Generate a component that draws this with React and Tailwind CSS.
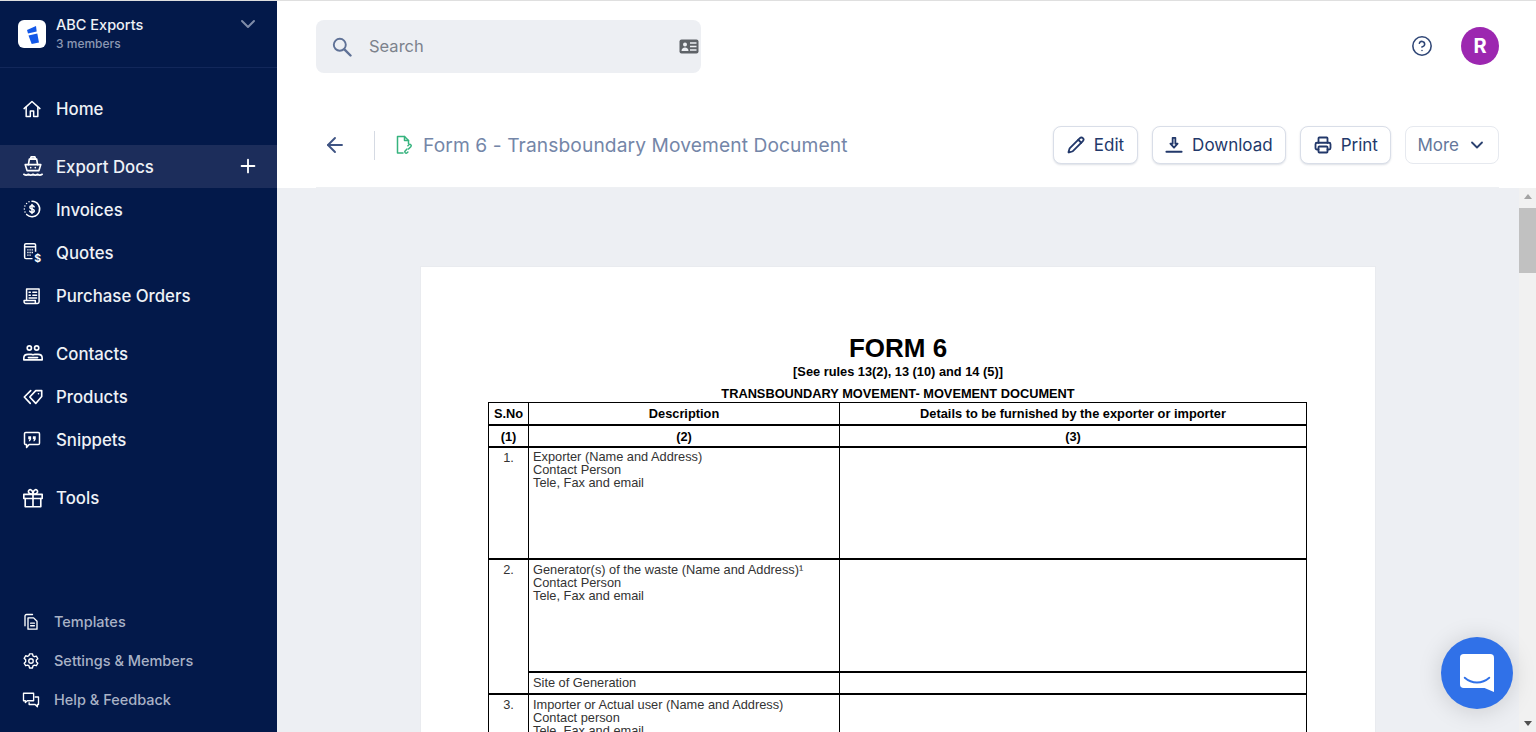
import { ChevronDown, Plus, ArrowLeft, Pencil, Printer, CircleHelp } from "lucide-react";

const Icon = ({ children, className = "" }) => (
  <svg
    viewBox="0 0 24 24"
    fill="none"
    stroke="currentColor"
    strokeWidth="1.800"
    strokeLinecap="round"
    strokeLinejoin="round"
    className={className}
  >
    {children}
  </svg>
);

const HomeIcon = () => (
  <Icon className="h-5 w-5">
    <path d="M2.500 11.500 12 3l9.500 8.500" />
    <path d="M5 10v11h5v-6.500h4V21h5V10" />
  </Icon>
);

const ShipIcon = () => (
  <Icon className="h-[22px] w-[22px]">
    <path d="M10 2h4l.8 2.500H9.200z" />
    <path d="M7 10.500 8 4.500h8l1 6" />
    <path d="M3.500 10.500h17l-2 6.500h-13z" />
    <path d="M2 21c1.800 1.200 3.400 1.200 5 0 1.700 1.200 3.300 1.200 5 0 1.700 1.200 3.300 1.200 5 0 1.600 1.200 3.200 1.200 5 0" />
    <path d="M9.500 13.800h.01M14.500 13.800h.01" />
  </Icon>
);

const InvoiceIcon = () => (
  <Icon className="h-5 w-5">
    <path d="M12 2.800a9.200 9.200 0 1 1-6.500 15.700" />
    <path d="M2.800 12h.01M3.500 8.300h.01M5.500 5.300h.01M8.400 3.400h.01M3.600 15.600h.01" />
    <path d="M14.600 9.500c-.5-1-1.500-1.300-2.600-1.300-1.400 0-2.500.7-2.500 1.900 0 2.600 5.200 1.300 5.200 3.900 0 1.200-1.200 1.900-2.700 1.900-1.100 0-2.200-.4-2.700-1.400" />
    <path d="M12 6.500v11" />
  </Icon>
);

const QuoteIcon = () => (
  <svg viewBox="0 0 24 24" fill="none" className="h-[21px] w-[21px]">
    <path d="M15.500 11V3.500A1.500 1.500 0 0 0 14 2H4.500A1.500 1.500 0 0 0 3 3.500v14A1.500 1.500 0 0 0 4.500 19H12" stroke="currentColor" strokeWidth="1.700" />
    <path d="M3 5.500h12.500" stroke="currentColor" strokeWidth="1.700" />
    <path d="M6 9h1.500M8.500 9H10M11 9h1.500M6 12h1.500M8.500 12H10M11 12h1.500M6 15h1.500M8.500 15H10" stroke="currentColor" strokeWidth="1.700" />
    <text x="14" y="23" fontSize="12" fontWeight="700" fill="currentColor" fontFamily="Inter, sans-serif">$</text>
  </svg>
);

const OrderIcon = () => (
  <Icon className="h-5 w-5">
    <path d="M5.500 17.500V3.500h15v15.500a2 2 0 0 1-2 2H4.500a2 2 0 0 1-2-2v-1.500h13.500v3.500" />
    <path d="M8.500 7.500h1.500M13 7.500h4.500M8.500 11h1.500M13 11h4.500M8.500 14.500h9" />
  </Icon>
);

const ContactsIcon = () => (
  <Icon className="h-[22px] w-[22px]">
    <circle cx="8" cy="6.500" r="2.300" />
    <circle cx="16" cy="6.500" r="2.300" />
    <path d="M2 19.500v-2c0-2.500 2-4 4.500-4H10c1.200 0 2 .5 2 .5s.8-.5 2-.5h3.500c2.500 0 4.500 1.500 4.500 4v2z" />
    <path d="M7 17h10" />
  </Icon>
);

const TagIcon = () => (
  <Icon className="h-[22px] w-[22px]">
    <path d="M8.500 12 15 5h6.500v6.500L15 19z" />
    <path d="M9.500 5 2.500 12 9 19" />
    <path d="M18 8.500h.01" />
  </Icon>
);

const SnippetIcon = () => (
  <svg viewBox="0 0 24 24" fill="none" className="h-5 w-5">
    <path d="M4.500 3h15A1.500 1.500 0 0 1 21 4.500V16a1.500 1.500 0 0 1-1.500 1.500H8.500L5.500 21v-3.500h-1A1.500 1.500 0 0 1 3 16V4.500A1.500 1.500 0 0 1 4.500 3z" stroke="currentColor" strokeWidth="1.800" strokeLinejoin="round" />
    <path d="M7.500 7.500h3.500v3.500l-1.500 2.500h-1.500l1-2.500h-1.500zM13 7.500h3.500v3.500L15 13.500h-1.500l1-2.500H13z" fill="currentColor" />
  </svg>
);

const GiftIcon = () => (
  <Icon className="h-[22px] w-[22px]">
    <rect x="2" y="8" width="20" height="4.500" />
    <path d="M3.500 12.500V21.500h17v-9M12 8v13.500" />
    <path d="M12 8C10 8 7 7.500 7 5a2 2 0 0 1 2.500-2C11 3.400 12 6 12 8zM12 8c2 0 5-.5 5-3a2 2 0 0 0-2.500-2C13 3.400 12 6 12 8z" />
  </Icon>
);

const TemplateIcon = () => (
  <Icon className="h-[18px] w-[18px]">
    <path d="M4 17V4a2 2 0 0 1 2-2h8" />
    <path d="M8 6.500h7.500l4.500 4.500v10.500H8z" />
    <path d="M11.500 13.500h5M11.500 17h5" />
  </Icon>
);

const GearIcon = () => (
  <Icon className="h-[18px] w-[18px]">
    <circle cx="12" cy="12" r="3" />
    <path d="M10 2.500h4l.6 2.700 1.900 1.100 2.600-.8 2 3.500-2 1.800v2.200l2 1.900-2 3.400-2.600-.8-1.900 1.100-.6 2.700h-4l-.6-2.700-1.900-1.100-2.600.8-2-3.400 2-1.900V10.300l-2-1.800 2-3.500 2.600.8 1.900-1.100z" />
  </Icon>
);

const ChatIcon = () => (
  <Icon className="h-[18px] w-[18px]">
    <path d="M2 3h13.500v10H7l-2.500 2.500V13H2z" />
    <path d="M17.500 8h4.500v10h-1.500v3l-3-3H9.500v-2.500" />
  </Icon>
);

const BrandMark = () => (
  <div className="flex h-7 w-7 items-center justify-center rounded-md bg-white">
    <svg viewBox="0 0 28 28" className="h-7 w-7">
      <path d="M9 10 18 6l.7 5.500L10 13.500z" fill="#1358e8" />
      <path d="M10.500 15.500l8.800-2L21 22.500 13.700 24z" fill="#1358e8" />
    </svg>
  </div>
);

const SearchGlyph = () => (
  <svg viewBox="0 0 20 20" fill="none" stroke="#5f7196" strokeLinecap="round" className="h-5 w-5">
    <circle cx="7.800" cy="7.800" r="6" strokeWidth="1.900" />
    <path d="M12.400 12.400 18.500 18.500" strokeWidth="2.400" />
  </svg>
);

const CardIcon = () => (
  <svg viewBox="0 0 20 15" className="h-[15px] w-5">
    <rect x="0.500" y="0.500" width="19" height="14" rx="2" fill="#5f6368" />
    <circle cx="6" cy="5.500" r="2" fill="#edeff3" />
    <path d="M2.500 12c0-2.300 1.500-3.500 3.500-3.500S9.500 9.700 9.500 12z" fill="#edeff3" />
    <path d="M11 4h6.500M11 7.500h6.500M11 11h6.500" stroke="#edeff3" strokeWidth="1.400" />
  </svg>
);

const FileLinkIcon = () => (
  <svg viewBox="0 0 18 20" fill="none" stroke="#36b37e" strokeWidth="1.500" strokeLinecap="round" strokeLinejoin="round" className="h-5 w-[18px]">
    <path d="M7 18H1.500V1.500h7l4 4v3" />
    <path d="M8.500 1.500v4h4" />
    <path d="M12.500 14l2.300-2.300a1.300 1.300 0 0 0-1.900-1.900l-1 1" />
    <path d="M11 14l-1.800 1.900a1.300 1.300 0 0 0 1.900 1.900l.8-.8" />
  </svg>
);

const DownloadIcon = () => (
  <svg viewBox="0 0 20 20" fill="none" stroke="currentColor" strokeWidth="2" strokeLinecap="round" strokeLinejoin="round" className="h-[18px] w-[18px]">
    <path d="M8.500 2h3v6.500h2.500L10 13 6 8.500h2.500z" />
    <path d="M1.500 17.500h17" />
  </svg>
);

const MessengerIcon = () => (
  <svg viewBox="0 0 36 40" className="h-[38px] w-[34px]">
    <path d="M4 0h28a4 4 0 0 1 4 4v36l-10-4H4a4 4 0 0 1-4-4V4a4 4 0 0 1 4-4z" fill="#fff" />
    <path d="M5 25c4 3.500 9 5 13 5s9-1.500 13-5" fill="none" stroke="#3071e8" strokeWidth="2" strokeLinecap="round" />
  </svg>
);

const mainGroups = [
  [{ label: "Home", icon: <HomeIcon /> }],
  [
    { label: "Export Docs", icon: <ShipIcon />, active: true },
    { label: "Invoices", icon: <InvoiceIcon /> },
    { label: "Quotes", icon: <QuoteIcon /> },
    { label: "Purchase Orders", icon: <OrderIcon /> },
  ],
  [
    { label: "Contacts", icon: <ContactsIcon /> },
    { label: "Products", icon: <TagIcon /> },
    { label: "Snippets", icon: <SnippetIcon /> },
  ],
  [{ label: "Tools", icon: <GiftIcon /> }],
];

const bottomLinks = [
  { label: "Templates", icon: <TemplateIcon /> },
  { label: "Settings & Members", icon: <GearIcon /> },
  { label: "Help & Feedback", icon: <ChatIcon /> },
];

function Sidebar() {
  return (
    <aside className="flex h-full w-[277px] shrink-0 flex-col bg-[#03194a] text-[#eef1f6]">
      <div className="flex h-[67px] shrink-0 items-center gap-2.5 border-b border-[#12275a] pl-[18px] pr-[17px]">
        <BrandMark />
        <div className="mb-[3px] flex-1">
          <p className="text-[14.500px] font-medium leading-[22px]">ABC Exports</p>
          <p className="text-[12px] font-medium leading-[16px] text-[#8b97b2]">3 members</p>
        </div>
        <ChevronDown className="mb-[20px] h-[24px] w-[24px] text-[#7f8ca9]" strokeWidth={2} />
      </div>

      <nav className="flex flex-col gap-[14.300px] pt-[19px]">
        {mainGroups.map((group) => (
          <div key={group[0].label} className="flex flex-col">
            {group.map((item) => (
              <div
                key={item.label}
                className={`flex h-[43.250px] items-center pl-[22px] pr-[18px] text-white ${item.active ? "bg-[#1c2d5b]" : ""}`}
              >
                <span className="flex w-[34px] shrink-0 items-center">{item.icon}</span>
                <span className="flex-1 pt-[2px] text-[16.800px] font-medium text-[#eef1f6]">{item.label}</span>
                {item.active && <Plus className="h-[22px] w-[22px]" strokeWidth={2} />}
              </div>
            ))}
          </div>
        ))}
      </nav>

      <div className="mt-auto flex flex-col pb-[13px]">
        {bottomLinks.map((item) => (
          <div key={item.label} className="flex h-[39px] items-center pl-[22px]">
            <span className="flex w-[32px] shrink-0 items-center text-white">{item.icon}</span>
            <span className="text-[14.500px] font-medium text-[#a9b2c6]">{item.label}</span>
          </div>
        ))}
      </div>
    </aside>
  );
}

function ActionButton({ icon, label }) {
  return (
    <button
      type="button"
      className="flex h-[38px] items-center gap-[9px] rounded-lg border border-[#d9dee8] bg-white px-[12.500px] text-[17px] text-[#22386a] shadow-[0_1px_2px_rgba(30,50,90,0.15)]"
    >
      {icon}
      <span className="pt-[2px]">{label}</span>
    </button>
  );
}

function Topbar() {
  return (
    <header className="bg-white">
      <div className="flex h-[72px] items-start justify-between pl-[39px] pr-[37px] pt-[19px]">
        <div className="flex h-[53px] w-[385px] items-center rounded-lg bg-[#edeff3] pl-[16px] pr-[2px]">
          <SearchGlyph />
          <span className="ml-[17px] flex-1 text-[16.500px] text-[#7c828c]">Search</span>
          <CardIcon />
        </div>
        <div className="flex items-center gap-[28px] pt-[7px]">
          <CircleHelp className="h-[22px] w-[22px] text-[#2f4676]" strokeWidth={1.700} />
          <div className="flex h-[38px] w-[38px] items-center justify-center rounded-full bg-[#9c27b0] text-[20px] font-bold text-white">
            R
          </div>
        </div>
      </div>
      <div className="ml-[39px] mr-[37px] flex h-[115px] items-start border-b border-[#eef0f3] pt-[53px]">
        <div className="flex h-[38px] items-center">
          <ArrowLeft className="ml-[7px] h-[24px] w-[24px] text-[#3f5483]" strokeWidth={1.900} />
          <span className="ml-[27px] mr-[21px] h-[29px] w-px bg-[#d5dae3]" />
          <FileLinkIcon />
          <h1 className="ml-[9px] text-[19.200px] tracking-[0.1px] text-[#7486a8]">
            Form 6 - Transboundary Movement Document
          </h1>
        </div>
        <div className="ml-auto flex gap-[14px]">
          <ActionButton icon={<Pencil className="h-[18px] w-[18px]" strokeWidth={2.400} />} label="Edit" />
          <ActionButton icon={<DownloadIcon />} label="Download" />
          <ActionButton icon={<Printer className="h-[18px] w-[18px]" strokeWidth={2.400} />} label="Print" />
          <button
            type="button"
            className="flex h-[38px] items-center gap-[8px] rounded-lg border border-[#e6e9ef] bg-white px-[11px] text-[17px] text-[#64779b]"
          >
            <span className="pt-[2px]">More</span>
            <ChevronDown className="h-[20px] w-[20px] text-[#2b4170]" strokeWidth={2.200} />
          </button>
        </div>
      </div>
    </header>
  );
}

const cell = "border border-b-2 border-black";

function FormTable() {
  return (
    <table className="w-[818px] table-fixed border-collapse text-[12.800px] leading-[13px] text-[#333]">
      <colgroup>
        <col className="w-[40px]" />
        <col className="w-[311px]" />
        <col className="w-[467px]" />
      </colgroup>
      <tbody>
        <tr className="h-[22px] text-center font-bold text-black">
          <td className={`${cell} pt-px align-middle`}>S.No</td>
          <td className={`${cell} pt-px align-middle`}>Description</td>
          <td className={`${cell} pt-px align-middle`}>Details to be furnished by the exporter or importer</td>
        </tr>
        <tr className="h-[22px] text-center font-bold text-black">
          <td className={`${cell} pt-[2px] align-middle`}>(1)</td>
          <td className={`${cell} pt-[2px] align-middle`}>(2)</td>
          <td className={`${cell} pt-[2px] align-middle`}>(3)</td>
        </tr>
        <tr className="h-[112.500px]">
          <td className={`${cell} pt-[3px] text-center align-top`}>1.</td>
          <td className={`${cell} pl-1 pt-[2px] align-top`}>
            Exporter (Name and Address)
            <br />
            Contact Person
            <br />
            Tele, Fax and email
          </td>
          <td className={cell} />
        </tr>
        <tr className="h-[113px]">
          <td rowSpan={2} className={`${cell} pt-[3px] text-center align-top`}>2.</td>
          <td className={`${cell} pl-1 pt-[3px] align-top`}>
            Generator(s) of the waste (Name and Address)¹
            <br />
            Contact Person
            <br />
            Tele, Fax and email
          </td>
          <td className={cell} />
        </tr>
        <tr className="h-[22px]">
          <td className={`${cell} pb-[2px] pl-1 align-middle`}>Site of Generation</td>
          <td className={cell} />
        </tr>
        <tr className="h-[112px]">
          <td className={`${cell} pt-[3px] text-center align-top`}>3.</td>
          <td className={`${cell} pl-1 pt-[3px] align-top`}>
            Importer or Actual user (Name and Address)
            <br />
            Contact person
            <br />
            Tele, Fax and email
          </td>
          <td className={cell} />
        </tr>
      </tbody>
    </table>
  );
}

function DocumentPage() {
  return (
    <div className="min-h-0 flex-1 overflow-hidden pt-[78px]">
      <div className="mx-auto w-[956px] border border-[#e9ebef] bg-white pt-[66px] font-['Liberation_Sans',Arial,sans-serif] text-black">
        <div className="text-center">
          <h2 className="text-[26px] font-bold leading-[30px]">FORM 6</h2>
          <p className="mt-[1px] text-[12.800px] font-bold leading-[16px]">[See rules 13(2), 13 (10) and 14 (5)]</p>
          <p className="mt-[6px] text-[12.800px] font-bold leading-[16px]">TRANSBOUNDARY MOVEMENT- MOVEMENT DOCUMENT</p>
        </div>
        <div className="ml-[67px] pb-10">
          <FormTable />
        </div>
      </div>
    </div>
  );
}

function Scrollbar() {
  return (
    <div className="flex w-[17px] shrink-0 flex-col items-center justify-between bg-[#f1f1f1] py-[6px]">
      <div className="flex w-full flex-col items-center">
        <span className="h-0 w-0 border-x-[4px] border-b-[5px] border-x-transparent border-b-[#a3a3a3]" />
        <span className="mt-[9px] h-[65px] w-full bg-[#c1c1c1]" />
      </div>
      <span className="h-0 w-0 border-x-[4px] border-t-[5px] border-x-transparent border-t-[#505050]" />
    </div>
  );
}

export default function App() {
  return (
    <div className="relative flex h-[732px] w-full flex-col overflow-hidden font-['Inter',sans-serif]">
      <div className="h-px shrink-0 bg-[#dfdfdf]" />
      <div className="flex min-h-0 flex-1">
        <Sidebar />
        <main className="flex min-w-0 flex-1 flex-col bg-[#edeff3]">
          <Topbar />
          <div className="flex min-h-0 flex-1">
            <DocumentPage />
            <Scrollbar />
          </div>
        </main>
      </div>
      <div className="absolute bottom-[23px] right-[23px] flex h-[72px] w-[72px] items-center justify-center rounded-full bg-[#3071e8] shadow-[0_2px_24px_rgba(0,0,0,0.15)]">
        <MessengerIcon />
      </div>
    </div>
  );
}
